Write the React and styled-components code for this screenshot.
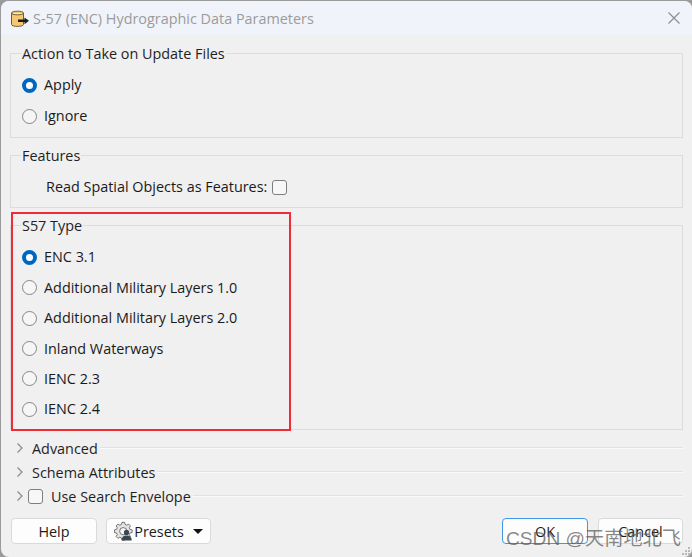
import React from "react"
import styled, { createGlobalStyle } from "styled-components"

const GlobalStyle = createGlobalStyle`
  html, body {
    margin: 0;
    padding: 0;
    background: #9a9a9a;
  }
  body {
    font-family: "Open Sans", "Noto Sans", sans-serif;
    font-size: 14.4px;
    color: #1a1a1a;
  }
`

const Window = styled.div`
  position: relative;
  width: 691px;
  height: 556px;
  margin-left: 1px;
  margin-top: 1px;
  box-sizing: border-box;
  background: #f0f0f0;
  border-radius: 8px;
  display: flex;
  flex-direction: column;
  overflow: hidden;
`

const TitleBar = styled.div`
  height: 34px;
  flex: none;
  display: flex;
  align-items: center;
  padding: 0 12px 0 9px;
  gap: 3px;
  background: #f0f3f9;
`

const Title = styled.div`
  flex: 1;
  color: #9b9b9b;
  font-size: 14.4px;
`

const Content = styled.div`
  flex: 1;
  display: flex;
  flex-direction: column;
  padding: 9px 9px 10px 9px;
`

const Group = styled.fieldset`
  margin: 0 0 ${p => p.$gap}px;
  padding: 0 11px;
  min-width: 0;
  height: ${p => p.$height}px;
  box-sizing: border-box;
  border: 1px solid #dcdcdc;
  display: block;
`

const Legend = styled.legend`
  padding: 0 1px;
  margin-left: -1px;
  line-height: 19px;
  color: #1f1f1f;
`

const OptionList = styled.div`
  display: flex;
  flex-direction: column;
  padding-top: ${p => p.$top}px;
  gap: ${p => p.$gap}px;
`

const Option = styled.div`
  display: flex;
  align-items: center;
  gap: 7px;
  height: 20px;
  line-height: 20px;
`

const Radio = styled.span`
  width: 15px;
  height: 15px;
  flex: none;
  box-sizing: border-box;
  border-radius: 50%;
  background: ${p => (p.$on ? "#fff" : "#f6f6f6")};
  border: ${p => (p.$on ? "4.5px solid #0067c0" : "1px solid #858585")};
`

const Check = styled.span`
  width: 15px;
  height: 15px;
  flex: none;
  box-sizing: border-box;
  border-radius: 3px;
  border: 1px solid #7e7e7e;
  background: #f7f7f7;
`

const FeatureRow = styled.div`
  display: flex;
  align-items: center;
  gap: 5px;
  padding: 12px 0 0 24px;
  line-height: 20px;
`

const Section = styled.div`
  display: flex;
  align-items: center;
  height: 24px;
  padding-left: 6px;
`

const Arrow = styled.svg`
  width: 8px;
  height: 12px;
  flex: none;
  margin-right: ${p => p.$gap}px;
`

const SectionLabel = styled.span`
  margin-left: ${p => p.$left || 0}px;
  padding-right: 2px;
  color: #1f1f1f;
`

const Rule = styled.div`
  flex: 1;
  height: 2px;
  background: #fafafa;
  border-top: 1px solid #e2e2e2;
  box-sizing: border-box;
`

const Sections = styled.div`
  display: flex;
  flex-direction: column;
`

const Footer = styled.div`
  display: flex;
  align-items: center;
  margin-top: 10px;
  padding-left: 1px;
`

const Button = styled.button`
  height: 26px;
  width: ${p => p.$width}px;
  margin-right: ${p => p.$gap || 0}px;
  padding: 0;
  box-sizing: border-box;
  background: #fdfdfd;
  border: 1px solid ${p => (p.$primary ? "#3f97e6" : "#dadada")};
  border-radius: 4px;
  font: inherit;
  color: #1a1a1a;
  display: flex;
  align-items: center;
  justify-content: center;
`

const PresetLabel = styled.span`
  margin: 0 9px 0 1px;
`

const Caret = styled.span`
  width: 0;
  height: 0;
  border-left: 5px solid transparent;
  border-right: 5px solid transparent;
  border-top: 5px solid #111;
`

const Spacer = styled.div`
  flex: 1;
`

const Highlight = styled.div`
  position: absolute;
  left: 10px;
  top: 211px;
  width: 280px;
  height: 219px;
  box-sizing: border-box;
  border: 2px solid #ee2b36;
  pointer-events: none;
`

const Watermark = styled.div`
  position: absolute;
  right: 11px;
  bottom: 6px;
  font-family: "Liberation Sans", "Noto Sans CJK SC", sans-serif;
  font-size: 19.2px;
  line-height: 24px;
  color: rgba(90, 90, 90, 0.72);
  white-space: nowrap;
  pointer-events: none;
`

const Grip = styled.svg`
  position: absolute;
  right: 1px;
  bottom: 1px;
  width: 10px;
  height: 10px;
`

const CloseIcon = () => (
  <svg width="12" height="12" viewBox="0 0 12 12">
    <path d="M0.5 0.5L11.5 11.5M11.5 0.5L0.5 11.5" stroke="#8c8c8c" strokeWidth="1.1" fill="none" />
  </svg>
)

const DbIcon = () => (
  <svg width="20" height="19" viewBox="0 0 20 19">
    <path d="M1.5 4C1.5 1.6 13.5 1.6 13.5 4V15.5C13.5 18 1.5 18 1.5 15.5Z" fill="#f4c873" stroke="#6e5a34" />
    <path d="M1.5 4C1.5 6.4 13.5 6.4 13.5 4" fill="#fbe6b4" stroke="#6e5a34" />
    <path d="M8 10.6H14.5V8.4L19 11.8L14.5 15.2V13H8Z" fill="#1d1d1d" />
  </svg>
)

const ArrowIcon = ({ gap }) => (
  <Arrow $gap={gap} viewBox="0 0 8 12">
    <path d="M1.5 1.5L6 6L1.5 10.5" stroke="#8d8d8d" strokeWidth="1.3" fill="none" />
  </Arrow>
)

const gearPath =
  "M8.2 1H11.3L11.8 3.4L13.8 4.3L15.9 3L18 5.1L16.7 7.2L17.6 9.2L20 9.7V12.8L17.6 13.3L16.7 15.3L18 17.4L15.9 19.5L13.8 18.2L11.8 19.1L11.3 21.5H8.2L7.7 19.1L5.7 18.2L3.6 19.5L1.5 17.4L2.8 15.3L1.9 13.3L-0.5 12.8V9.7L1.9 9.2L2.8 7.2L1.5 5.1L3.6 3L5.7 4.3L7.7 3.4Z"

const PresetIcon = () => (
  <svg width="19" height="20" viewBox="-1 0 22 22">
    <path d={gearPath} fill="#e4e4e4" stroke="#6b6b6b" strokeWidth="1.1" />
    <circle cx="9.7" cy="11.2" r="4.2" fill="#f7f7f7" stroke="#6b6b6b" strokeWidth="1.1" />
    <circle cx="13.5" cy="12.6" r="3" fill="#3a4650" />
    <path d="M8 22C8 17.5 10.5 16.2 13.5 16.2C16.5 16.2 19.5 17.5 19.5 22Z" fill="#3a4650" />
  </svg>
)

const actions = [
  { label: "Apply", on: true },
  { label: "Ignore" }
]

const types = [
  { label: "ENC 3.1", on: true },
  { label: "Additional Military Layers 1.0" },
  { label: "Additional Military Layers 2.0" },
  { label: "Inland Waterways" },
  { label: "IENC 2.3" },
  { label: "IENC 2.4" }
]

const Options = ({ items, top, gap }) => (
  <OptionList $top={top} $gap={gap}>
    {items.map(o => (
      <Option key={o.label}>
        <Radio $on={o.on} />
        {o.label}
      </Option>
    ))}
  </OptionList>
)

export default function App() {
  return (
    <>
      <GlobalStyle />
      <Window>
        <TitleBar>
          <DbIcon />
          <Title>S-57 (ENC) Hydrographic Data Parameters</Title>
          <CloseIcon />
        </TitleBar>
        <Content>
          <Group $height={94} $gap={8}>
            <Legend>Action to Take on Update Files</Legend>
            <Options items={actions} top={12} gap={11} />
          </Group>
          <Group $height={62} $gap={8}>
            <Legend>Features</Legend>
            <FeatureRow>
              Read Spatial Objects as Features:
              <Check />
            </FeatureRow>
          </Group>
          <Group $height={214} $gap={6}>
            <Legend>S57 Type</Legend>
            <Options items={types} top={12.4} gap={10.4} />
          </Group>
          <Sections>
            <Section>
              <ArrowIcon gap={8} />
              <SectionLabel>Advanced</SectionLabel>
              <Rule />
            </Section>
            <Section>
              <ArrowIcon gap={8} />
              <SectionLabel>Schema Attributes</SectionLabel>
              <Rule />
            </Section>
            <Section>
              <ArrowIcon gap={4} />
              <Check />
              <SectionLabel $left={8}>Use Search Envelope</SectionLabel>
              <Rule />
            </Section>
          </Sections>
          <Footer>
            <Button $width={86} $gap={9}>Help</Button>
            <Button $width={105}>
              <PresetIcon />
              <PresetLabel>Presets</PresetLabel>
              <Caret />
            </Button>
            <Spacer />
            <Button $width={86} $gap={10} $primary>OK</Button>
            <Button $width={85}>Cancel</Button>
          </Footer>
        </Content>
        <Highlight />
        <Watermark>CSDN @天南地北飞</Watermark>
        <Grip viewBox="0 0 10 10">
          <g fill="#b9b9b9">
            <rect x="7" y="1" width="2" height="2" />
            <rect x="4" y="4" width="2" height="2" />
            <rect x="7" y="4" width="2" height="2" />
            <rect x="1" y="7" width="2" height="2" />
            <rect x="4" y="7" width="2" height="2" />
            <rect x="7" y="7" width="2" height="2" />
          </g>
        </Grip>
      </Window>
    </>
  )
}
